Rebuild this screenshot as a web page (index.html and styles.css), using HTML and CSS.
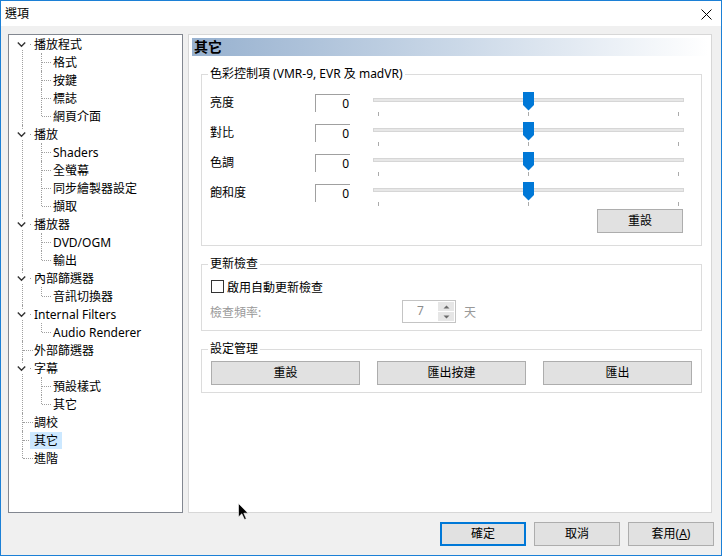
FILE: index.html
```html
<!DOCTYPE html>
<html lang="zh-Hant">
<head>
<meta charset="utf-8">
<title>選項</title>
<link rel="stylesheet" href="styles.css">
</head>
<body>
<div class="window">
  <div class="titlebar">
    <span class="title">選項</span>
    <svg class="close" width="11" height="11" viewBox="0 0 11 11"><path d="M0.5 0.5L10.5 10.5M10.5 0.5L0.5 10.5" stroke="#000" stroke-width="1"/></svg>
  </div>
  <div class="body">
    <div class="main">
      <div class="tree">
        <ul class="tree-list">
          <li class="top open">
            <div class="row"><span class="twisty"><svg width="9" height="9" viewBox="0 0 9 9"><rect width="9" height="9" fill="#fff"/><polyline points="0.8,2.6 4.5,6.3 8.2,2.6" fill="none" stroke="#333" stroke-width="1.4"/></svg></span><span class="lbl">播放程式</span></div>
            <ul class="sub">
              <li class="child"><div class="row"><span class="lbl">格式</span></div></li>
              <li class="child"><div class="row"><span class="lbl">按鍵</span></div></li>
              <li class="child"><div class="row"><span class="lbl">標誌</span></div></li>
              <li class="child"><div class="row"><span class="lbl">網頁介面</span></div></li>
            </ul>
          </li>
          <li class="top open">
            <div class="row"><span class="twisty"><svg width="9" height="9" viewBox="0 0 9 9"><rect width="9" height="9" fill="#fff"/><polyline points="0.8,2.6 4.5,6.3 8.2,2.6" fill="none" stroke="#333" stroke-width="1.4"/></svg></span><span class="lbl">播放</span></div>
            <ul class="sub">
              <li class="child"><div class="row"><span class="lbl">Shaders</span></div></li>
              <li class="child"><div class="row"><span class="lbl">全螢幕</span></div></li>
              <li class="child"><div class="row"><span class="lbl">同步繪製器設定</span></div></li>
              <li class="child"><div class="row"><span class="lbl">擷取</span></div></li>
            </ul>
          </li>
          <li class="top open">
            <div class="row"><span class="twisty"><svg width="9" height="9" viewBox="0 0 9 9"><rect width="9" height="9" fill="#fff"/><polyline points="0.8,2.6 4.5,6.3 8.2,2.6" fill="none" stroke="#333" stroke-width="1.4"/></svg></span><span class="lbl">播放器</span></div>
            <ul class="sub">
              <li class="child"><div class="row"><span class="lbl">DVD/OGM</span></div></li>
              <li class="child"><div class="row"><span class="lbl">輸出</span></div></li>
            </ul>
          </li>
          <li class="top open">
            <div class="row"><span class="twisty"><svg width="9" height="9" viewBox="0 0 9 9"><rect width="9" height="9" fill="#fff"/><polyline points="0.8,2.6 4.5,6.3 8.2,2.6" fill="none" stroke="#333" stroke-width="1.4"/></svg></span><span class="lbl">內部篩選器</span></div>
            <ul class="sub">
              <li class="child"><div class="row"><span class="lbl">音訊切換器</span></div></li>
            </ul>
          </li>
          <li class="top open">
            <div class="row"><span class="twisty"><svg width="9" height="9" viewBox="0 0 9 9"><rect width="9" height="9" fill="#fff"/><polyline points="0.8,2.6 4.5,6.3 8.2,2.6" fill="none" stroke="#333" stroke-width="1.4"/></svg></span><span class="lbl">Internal Filters</span></div>
            <ul class="sub">
              <li class="child"><div class="row"><span class="lbl">Audio Renderer</span></div></li>
            </ul>
          </li>
          <li class="top">
            <div class="row"><span class="twisty"></span><span class="lbl">外部篩選器</span></div>
          </li>
          <li class="top open">
            <div class="row"><span class="twisty"><svg width="9" height="9" viewBox="0 0 9 9"><rect width="9" height="9" fill="#fff"/><polyline points="0.8,2.6 4.5,6.3 8.2,2.6" fill="none" stroke="#333" stroke-width="1.4"/></svg></span><span class="lbl">字幕</span></div>
            <ul class="sub">
              <li class="child"><div class="row"><span class="lbl">預設樣式</span></div></li>
              <li class="child"><div class="row"><span class="lbl">其它</span></div></li>
            </ul>
          </li>
          <li class="top">
            <div class="row"><span class="twisty"></span><span class="lbl">調校</span></div>
          </li>
          <li class="top">
            <div class="row"><span class="twisty"></span><span class="lbl selected">其它</span></div>
          </li>
          <li class="top">
            <div class="row"><span class="twisty"></span><span class="lbl">進階</span></div>
          </li>
        </ul>
      </div>

      <div class="panel">
        <div class="panel-head">其它</div>

        <fieldset class="group">
          <legend>色彩控制項 (VMR-9, EVR 及 madVR)</legend>
          <div class="group-body g-color">
            <div class="sliders">
              <div class="srow">
                <span class="slabel">亮度</span><span class="edit">0</span>
                <div class="slider">
                  <div class="track"></div>
                  <div class="ticks"><i class="tick"></i><i class="tick"></i><i class="tick"></i></div>
                  <svg class="thumb" width="11" height="19" viewBox="0 0 11 19"><polygon points="0,0 11,0 11,13 5.5,18.5 0,13" fill="#0078d7"/></svg>
                </div>
              </div>
              <div class="srow">
                <span class="slabel">對比</span><span class="edit">0</span>
                <div class="slider">
                  <div class="track"></div>
                  <div class="ticks"><i class="tick"></i><i class="tick"></i><i class="tick"></i></div>
                  <svg class="thumb" width="11" height="19" viewBox="0 0 11 19"><polygon points="0,0 11,0 11,13 5.5,18.5 0,13" fill="#0078d7"/></svg>
                </div>
              </div>
              <div class="srow">
                <span class="slabel">色調</span><span class="edit">0</span>
                <div class="slider">
                  <div class="track"></div>
                  <div class="ticks"><i class="tick"></i><i class="tick"></i><i class="tick"></i></div>
                  <svg class="thumb" width="11" height="19" viewBox="0 0 11 19"><polygon points="0,0 11,0 11,13 5.5,18.5 0,13" fill="#0078d7"/></svg>
                </div>
              </div>
              <div class="srow">
                <span class="slabel">飽和度</span><span class="edit">0</span>
                <div class="slider">
                  <div class="track"></div>
                  <div class="ticks"><i class="tick"></i><i class="tick"></i><i class="tick"></i></div>
                  <svg class="thumb" width="11" height="19" viewBox="0 0 11 19"><polygon points="0,0 11,0 11,13 5.5,18.5 0,13" fill="#0078d7"/></svg>
                </div>
              </div>
            </div>
            <div class="reset-row"><button class="btn btn-reset">重設</button></div>
          </div>
        </fieldset>

        <fieldset class="group">
          <legend>更新檢查</legend>
          <div class="group-body g-update">
            <div class="check-row"><span class="checkbox"></span><span>啟用自動更新檢查</span></div>
            <div class="freq-row">
              <span class="freq-label">檢查頻率:</span>
              <div class="spin">
                <span class="spin-val">7</span>
                <span class="spin-btns">
                  <span class="spin-btn"><svg width="7" height="4" viewBox="0 0 7 4"><polygon points="0.5,3.5 3.5,0.5 6.5,3.5" fill="#6a6a6a"/></svg></span>
                  <span class="spin-btn"><svg width="7" height="4" viewBox="0 0 7 4"><polygon points="0.5,0.5 6.5,0.5 3.5,3.5" fill="#6a6a6a"/></svg></span>
                </span>
              </div>
              <span class="unit">天</span>
            </div>
          </div>
        </fieldset>

        <fieldset class="group">
          <legend>設定管理</legend>
          <div class="group-body g-settings">
            <div class="btn-row">
              <button class="btn btn-wide">重設</button>
              <button class="btn btn-wide">匯出按建</button>
              <button class="btn btn-wide">匯出</button>
            </div>
          </div>
        </fieldset>
      </div>
    </div>

    <div class="footer">
      <button class="btn btn-foot btn-default">確定</button>
      <button class="btn btn-foot">取消</button>
      <button class="btn btn-foot">套用(<u>A</u>)</button>
    </div>
  </div>

  <svg class="cursor" width="12" height="19" viewBox="0 0 12 19"><polygon points="0.5,0.5 0.5,14 3.8,10.8 6.5,16.5 8.3,15.7 5.8,10.2 10,10.2" fill="#000" stroke="#fff" stroke-width="0.6"/></svg>
</div>
</body>
</html>
```

FILE: styles.css
```css
html, body {
  margin: 0;
  padding: 0;
  background: #fff;
}

body {
  font-family: "Noto Sans", "Noto Sans CJK TC", sans-serif;
  font-size: 12px;
  color: #000;
}

.window {
  position: relative;
  width: 722px;
  height: 556px;
  box-sizing: border-box;
  border: 1px solid #1c80d6;
  background: #f0f0f0;
  display: flex;
  flex-direction: column;
}

/* title bar */
.titlebar {
  flex: none;
  height: 25px;
  background: #fff;
  display: flex;
  align-items: center;
  justify-content: space-between;
  padding: 0 9px 0 4px;
}

.title {
  font-size: 12px;
  line-height: 16px;
  margin-top: 1px;
}

.close {
  display: block;
  margin-top: 2px;
}

/* body */
.body {
  flex: 1;
  display: flex;
  flex-direction: column;
  padding: 8px 7px 0 7px;
}

.main {
  display: flex;
  gap: 5px;
  height: 479px;
}

/* tree */
.tree {
  width: 175px;
  box-sizing: border-box;
  border: 1px solid #828790;
  background: #fff;
  overflow: hidden;
}

.tree-list, .sub {
  list-style: none;
  margin: 0;
  padding: 0;
}

.row {
  height: 18px;
  display: flex;
  align-items: center;
}

.twisty {
  width: 21px;
  height: 18px;
  flex: none;
  display: flex;
  align-items: center;
}

.twisty svg {
  display: block;
  margin-left: 8px;
  position: relative;
  z-index: 1;
}

.lbl {
  position: relative;
  z-index: 1;
  align-self: flex-end;
  height: 17px;
  line-height: 17px;
  padding: 0 4px;
  white-space: nowrap;
}

.lbl.selected {
  background: #cce8ff;
}

.child .lbl {
  margin-left: 40px;
}

.top {
  position: relative;
}

.top::before {
  content: "";
  position: absolute;
  left: 13px;
  top: 0;
  bottom: 0;
  border-left: 1px dotted #a0a0a0;
}

.top:first-child::before {
  top: 9px;
}

.top:last-child::before {
  bottom: auto;
  height: 9px;
}

.top::after {
  content: "";
  position: absolute;
  left: 14px;
  top: 9px;
  width: 10px;
  border-top: 1px dotted #a0a0a0;
}

.top.open::after {
  left: 21px;
  width: 1px;
}

.child {
  position: relative;
}

.child::before {
  content: "";
  position: absolute;
  left: 32px;
  top: 0;
  bottom: 0;
  border-left: 1px dotted #a0a0a0;
}

.child:last-child::before {
  bottom: auto;
  height: 9px;
}

.child::after {
  content: "";
  position: absolute;
  left: 33px;
  top: 9px;
  width: 9px;
  border-top: 1px dotted #a0a0a0;
}

/* right panel */
.panel {
  width: 524px;
  box-sizing: border-box;
  border: 1px solid #d7d7d7;
  background: #fff;
}

.panel-head {
  margin: 3px 3px 0 3px;
  height: 18px;
  line-height: 18px;
  padding-left: 2px;
  font-size: 14px;
  font-weight: bold;
  background: linear-gradient(to right, #97b1cf 0%, #c9d7e7 50%, #ffffff 100%);
}

.group {
  margin: 10px 9px 0 12px;
  padding: 0;
  border: 1px solid #dcdcdc;
  min-width: 0;
}

.group legend {
  margin-left: 6px;
  padding: 0 2px;
  line-height: 16px;
  height: 16px;
}

/* colour group */
.g-color {
  padding: 10px 17px 12px 8px;
}

.sliders {
  display: flex;
  flex-direction: column;
  gap: 6px;
}

.srow {
  display: flex;
  height: 24px;
}

.slabel {
  width: 105px;
  flex: none;
  margin-top: 2px;
  height: 18px;
  line-height: 18px;
}

.edit {
  width: 35px;
  height: 18px;
  flex: none;
  box-sizing: border-box;
  margin-top: 2px;
  border-top: 1px solid #a0a0a0;
  border-left: 1px solid #a0a0a0;
  text-align: right;
  padding-right: 1px;
  line-height: 17px;
}

.slider {
  position: relative;
  width: 311px;
  height: 24px;
  margin-left: 23px;
  flex: none;
}

.track {
  margin-top: 6px;
  height: 2px;
  border: 1px solid #d6d6d6;
  background: #e7e7e7;
}

.ticks {
  display: flex;
  justify-content: space-between;
  padding: 0 5px;
  margin-top: 10px;
}

.tick {
  display: block;
  width: 1px;
  height: 4px;
  background: #ababab;
}

.thumb {
  position: absolute;
  left: 150px;
  top: 0;
  display: block;
}

.reset-row {
  display: flex;
  justify-content: flex-end;
  margin-top: 3px;
}

.btn {
  font: inherit;
  color: #000;
  background: #e1e1e1;
  border: 1px solid #adadad;
  height: 24px;
  padding: 0;
  margin: 0;
  box-sizing: border-box;
  line-height: 20px;
}

.btn u {
  text-decoration: underline;
}

.btn-reset {
  width: 86px;
  margin-right: 1px;
}

/* update group */
.g-update {
  padding: 8px 8px 7px 8px;
}

.check-row {
  display: flex;
  align-items: center;
  height: 13px;
  gap: 3px;
}

.checkbox {
  width: 13px;
  height: 13px;
  box-sizing: border-box;
  border: 1px solid #333;
  background: #fff;
  margin-left: 1px;
  flex: none;
}

.freq-row {
  display: flex;
  align-items: center;
  margin-top: 7px;
  height: 23px;
  color: #999;
}

.freq-label {
  width: 192px;
  flex: none;
}

.spin {
  width: 54px;
  height: 23px;
  box-sizing: border-box;
  border: 1px solid #c4c4c4;
  display: flex;
  flex: none;
}

.spin-val {
  flex: 1;
  text-align: center;
  line-height: 20px;
  color: #8c8c8c;
}

.spin-btns {
  width: 16px;
  margin: 1px 1px 1px 0;
  display: flex;
  flex-direction: column;
  gap: 1px;
}

.spin-btn {
  flex: 1;
  background: #e6e6e6;
  display: flex;
  align-items: center;
  justify-content: center;
}

.spin-btn svg {
  display: block;
}

.unit {
  margin-left: 8px;
}

/* settings group */
.g-settings {
  padding: 4px 9px 7px 9px;
}

.btn-row {
  display: flex;
  gap: 17px;
}

.btn-wide {
  width: 149px;
}

/* footer */
.footer {
  display: flex;
  justify-content: flex-end;
  gap: 8px;
  margin-top: 9px;
}

.btn-foot {
  width: 86px;
}

.btn-default {
  border: 2px solid #0078d7;
}

.cursor {
  position: absolute;
  left: 237px;
  top: 502px;
  display: block;
}
```
